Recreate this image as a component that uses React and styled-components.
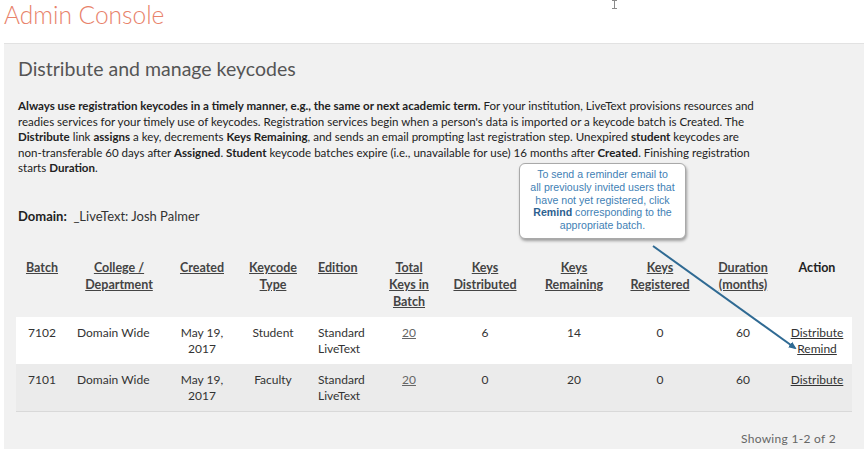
import React from "react";
import styled, { createGlobalStyle } from "styled-components";

const GlobalStyle = createGlobalStyle`
  html, body {
    margin: 0;
    padding: 0;
    background: #ffffff;
  }
  body {
    font-family: "Lato", "Open Sans", sans-serif;
    color: #333;
  }
`;

const columns = [
  { key: "batch", label: ["Batch"], width: 52, align: "center" },
  { key: "college", label: ["College /", "Department"], width: 102, align: "left", pad: 9 },
  { key: "created", label: ["Created"], width: 64, align: "center" },
  { key: "type", label: ["Keycode", "Type"], width: 78, align: "center" },
  { key: "edition", label: ["Edition"], width: 68, align: "left", pad: 6 },
  { key: "total", label: ["Total", "Keys in", "Batch"], width: 58, align: "center", link: true },
  { key: "distributed", label: ["Keys", "Distributed"], width: 94, align: "center" },
  { key: "remaining", label: ["Keys", "Remaining"], width: 84, align: "center" },
  { key: "registered", label: ["Keys", "Registered"], width: 88, align: "center" },
  { key: "duration", label: ["Duration", "(months)"], width: 78, align: "center" },
  { key: "action", label: ["Action"], width: 70, align: "center", plain: true },
];

const rows = [
  {
    batch: "7102",
    college: "Domain Wide",
    created: ["May 19,", "2017"],
    type: "Student",
    edition: ["Standard", "LiveText"],
    total: "20",
    distributed: "6",
    remaining: "14",
    registered: "0",
    duration: "60",
    action: ["Distribute", "Remind"],
  },
  {
    batch: "7101",
    college: "Domain Wide",
    created: ["May 19,", "2017"],
    type: "Faculty",
    edition: ["Standard", "LiveText"],
    total: "20",
    distributed: "0",
    remaining: "20",
    registered: "0",
    duration: "60",
    action: ["Distribute"],
  },
];

const lines = (value) =>
  Array.isArray(value)
    ? value.map((v, i) => (
        <React.Fragment key={i}>
          {i > 0 && <br />}
          {v}
        </React.Fragment>
      ))
    : value;

const App = () => {
  return (
    <Page>
      <GlobalStyle />
      <Title>Admin Console</Title>
      <Cursor>
        <svg width="7" height="9" viewBox="0 0 7 9">
          <path d="M1 0.5h5M3.5 0.5v8M1 8.5h5" stroke="#8a8a8a" strokeWidth="1" fill="none" />
        </svg>
      </Cursor>

      <Panel>
        <Heading>Distribute and manage keycodes</Heading>
        <Intro>
          <b>Always use registration keycodes in a timely manner, e.g., the same or next academic term.</b> For your
          institution, LiveText provisions resources and
          <br />
          readies services for your timely use of keycodes. Registration services begin when a person's data is
          imported or a keycode batch is Created. The
          <br />
          <b>Distribute</b> link <b>assigns</b> a key, decrements <b>Keys Remaining</b>, and sends an email prompting
          last registration step. Unexpired <b>student</b> keycodes are
          <br />
          non-transferable 60 days after <b>Assigned</b>. <b>Student</b> keycode batches expire (i.e., unavailable for
          use) 16 months after <b>Created</b>. Finishing registration
          <br />
          starts <b>Duration</b>.
        </Intro>

        <Domain>
          <b>Domain:</b>&nbsp; _LiveText: Josh Palmer
        </Domain>

        <Table>
          <colgroup>
            {columns.map((c) => (
              <col key={c.key} style={{ width: c.width }} />
            ))}
          </colgroup>
          <thead>
            <tr>
              {columns.map((c) => (
                <HeadCell key={c.key} $align={c.key === "edition" ? "left" : "center"} $pad={c.key === "edition" ? c.pad : 0}>
                  <HeadLabel $plain={c.plain}>{lines(c.label)}</HeadLabel>
                </HeadCell>
              ))}
            </tr>
          </thead>
          <tbody>
            {rows.map((r, i) => (
              <Row key={r.batch} $alt={i % 2 === 1}>
                {columns.map((c) => (
                  <Cell key={c.key} $align={c.align} $pad={c.pad || 0}>
                    {c.key === "action" ? (
                      r.action.map((a, j) => (
                        <React.Fragment key={a}>
                          {j > 0 && <br />}
                          <ActionLink href="#">{a}</ActionLink>
                        </React.Fragment>
                      ))
                    ) : c.link ? (
                      <CountLink href="#">{r[c.key]}</CountLink>
                    ) : (
                      lines(r[c.key])
                    )}
                  </Cell>
                ))}
              </Row>
            ))}
          </tbody>
        </Table>

        <Footer>Showing 1-2 of 2</Footer>

        <Callout>
          To send a reminder email to
          <br />
          all previously invited users that
          <br />
          have not yet registered, click
          <br />
          <strong>Remind</strong> corresponding to the
          <br />
          appropriate batch.
        </Callout>
      </Panel>

      <Pointer width="867" height="449" viewBox="0 0 867 449">
        <defs>
          <marker id="head" markerWidth="8" markerHeight="8" refX="6" refY="4" orient="auto" markerUnits="userSpaceOnUse">
            <path d="M0 0.5 L8 4 L0 7.5 Z" fill="#2f6a93" />
          </marker>
        </defs>
        <line x1="653" y1="246" x2="795" y2="348" stroke="#2f6a93" strokeWidth="2" markerEnd="url(#head)" />
      </Pointer>
    </Page>
  );
};

export default App;

const Page = styled.div`
  position: relative;
  width: 867px;
  height: 449px;
  overflow: hidden;
`;

const Title = styled.h1`
  margin: 0;
  padding-left: 4px;
  height: 30px;
  line-height: 30px;
  font-family: "Lato", sans-serif;
  font-weight: 300;
  font-size: 24.5px;
  color: #e8826a;
`;

const Cursor = styled.div`
  position: absolute;
  left: 611px;
  top: 0;
  line-height: 0;
`;

const Panel = styled.section`
  position: relative;
  margin: 13px 3px 0 4px;
  padding: 12px 12px 20px 12px;
  background: #f1f1f1;
  border-top: 1px solid #e2e2e2;
  height: 430px;
  box-sizing: border-box;
`;

const Heading = styled.h2`
  margin: 0;
  padding-left: 2px;
  font-family: "Lato", sans-serif;
  font-weight: 400;
  font-size: 19.5px;
  line-height: 26px;
  color: #555;
`;

const Intro = styled.p`
  margin: 16px 0 0 0;
  padding-left: 2px;
  font-size: 11.55px;
  line-height: 15.5px;
  color: #222;
  white-space: nowrap;

  b {
    font-weight: 700;
  }
`;

const Domain = styled.div`
  margin-top: 31px;
  padding-left: 2px;
  font-size: 13px;
  line-height: 18px;
  color: #333;

  b {
    color: #222;
  }
`;

const Table = styled.table`
  margin-top: 34px;
  width: 836px;
  table-layout: fixed;
  border-collapse: collapse;
  font-size: 12px;
`;

const HeadCell = styled.th`
  padding: 0 0 7px ${({ $pad }) => $pad}px;
  vertical-align: top;
  text-align: ${({ $align }) => $align};
  font-weight: 700;
  font-size: 12.5px;
  line-height: 17px;
  color: #444;
`;

const HeadLabel = styled.span`
  text-decoration: ${({ $plain }) => ($plain ? "none" : "underline")};
  color: ${({ $plain }) => ($plain ? "#222" : "#444")};
`;

const Row = styled.tr`
  background: ${({ $alt }) => ($alt ? "#ebebeb" : "#ffffff")};
  border-bottom: ${({ $alt }) => ($alt ? "1px solid #d9d9d9" : "none")};
`;

const Cell = styled.td`
  padding: 8px 0 7px ${({ $pad }) => $pad}px;
  vertical-align: top;
  text-align: ${({ $align }) => $align};
  line-height: 16px;
  color: #333;
`;

const CountLink = styled.a`
  color: #666;
  text-decoration: underline;
`;

const ActionLink = styled.a`
  color: #333;
  text-decoration: underline;
`;

const Footer = styled.div`
  margin-top: 19px;
  padding-right: 16px;
  text-align: right;
  font-size: 12px;
  line-height: 16px;
  letter-spacing: 0.3px;
  color: #666;
`;

const Callout = styled.div`
  position: absolute;
  left: 515px;
  top: 119px;
  width: 167px;
  box-sizing: border-box;
  padding: 4px 4px 6px;
  background: #ffffff;
  border: 1px solid #a9a9a9;
  border-radius: 6px;
  box-shadow: 1px 2px 3px rgba(0, 0, 0, 0.35);
  font-family: "Liberation Sans", Arial, sans-serif;
  font-size: 10.6px;
  line-height: 12.8px;
  text-align: center;
  color: #3f7fb5;

  strong {
    color: #2d6190;
  }
`;

const Pointer = styled.svg`
  position: absolute;
  left: 0;
  top: 0;
  pointer-events: none;
`;
